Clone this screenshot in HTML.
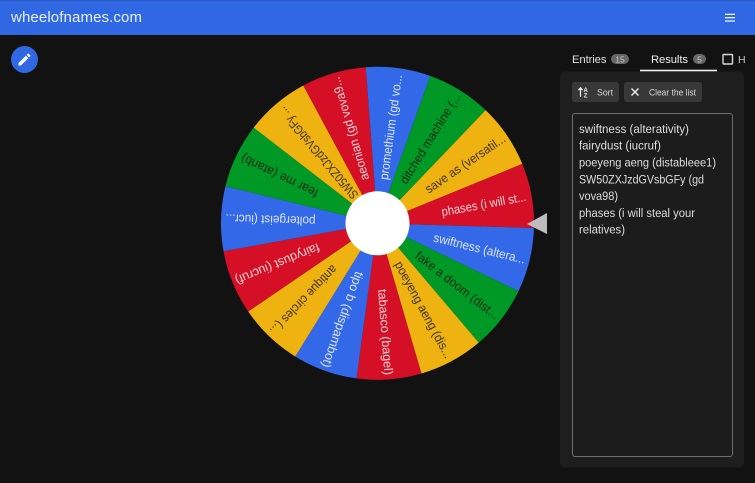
<!DOCTYPE html>
<html><head><meta charset="utf-8"><title>wheelofnames.com</title>
<style>
html,body{margin:0;padding:0;background:#121212;width:755px;height:483px;overflow:hidden}
svg{display:block;filter:blur(.3px)}
text{font-family:"Liberation Sans",sans-serif}
.w text{font-size:12.6px}
.l{fill:#fff;opacity:.82}.d{fill:#111;opacity:.8}
</style></head><body>
<svg width="755" height="483" viewBox="0 0 755 483" xmlns="http://www.w3.org/2000/svg">
<rect width="755" height="483" fill="#121212"/>
<rect width="755" height="35" fill="#3068e4"/>
<rect width="755" height="1" fill="#2a58c0"/>
<text x="11" y="22" font-size="15" fill="#e8f0fd" textLength="131" lengthAdjust="spacing">wheelofnames.com</text>
<g fill="#e8f0fd"><rect x="725" y="13.7" width="10" height="1.3"/><rect x="725" y="17" width="10" height="1.3"/><rect x="725" y="20.4" width="10" height="1.3"/></g>
<circle cx="24.5" cy="59.5" r="13.5" fill="#3068e4"/>
<path transform="translate(16.5 51.5) scale(.667)" fill="#f2f5fc" d="M3 17.25V21h3.75L17.81 9.94l-3.75-3.75L3 17.25zM20.71 7.04a1 1 0 0 0 0-1.41l-2.34-2.34a1 1 0 0 0-1.41 0l-1.83 1.83 3.75 3.75 1.83-1.83z"/>

<g class="w" transform="translate(377.5 223.3)">
<g id="wedges">
<path transform="rotate(1.7)" fill="#3369e8" d="M0 0L156.5 0A156.5 156.5 0 0 1 142.97 63.65Z"/>
<path transform="rotate(25.7)" fill="#009925" d="M0 0L156.5 0A156.5 156.5 0 0 1 142.97 63.65Z"/>
<path transform="rotate(49.7)" fill="#eeb211" d="M0 0L156.5 0A156.5 156.5 0 0 1 142.97 63.65Z"/>
<path transform="rotate(73.7)" fill="#d50f25" d="M0 0L156.5 0A156.5 156.5 0 0 1 142.97 63.65Z"/>
<path transform="rotate(97.7)" fill="#3369e8" d="M0 0L156.5 0A156.5 156.5 0 0 1 142.97 63.65Z"/>
<path transform="rotate(121.7)" fill="#eeb211" d="M0 0L156.5 0A156.5 156.5 0 0 1 142.97 63.65Z"/>
<path transform="rotate(145.7)" fill="#d50f25" d="M0 0L156.5 0A156.5 156.5 0 0 1 142.97 63.65Z"/>
<path transform="rotate(169.7)" fill="#3369e8" d="M0 0L156.5 0A156.5 156.5 0 0 1 142.97 63.65Z"/>
<path transform="rotate(193.7)" fill="#009925" d="M0 0L156.5 0A156.5 156.5 0 0 1 142.97 63.65Z"/>
<path transform="rotate(217.7)" fill="#eeb211" d="M0 0L156.5 0A156.5 156.5 0 0 1 142.97 63.65Z"/>
<path transform="rotate(241.7)" fill="#d50f25" d="M0 0L156.5 0A156.5 156.5 0 0 1 142.97 63.65Z"/>
<path transform="rotate(265.7)" fill="#3369e8" d="M0 0L156.5 0A156.5 156.5 0 0 1 142.97 63.65Z"/>
<path transform="rotate(289.7)" fill="#009925" d="M0 0L156.5 0A156.5 156.5 0 0 1 142.97 63.65Z"/>
<path transform="rotate(313.7)" fill="#eeb211" d="M0 0L156.5 0A156.5 156.5 0 0 1 142.97 63.65Z"/>
<path transform="rotate(337.7)" fill="#d50f25" d="M0 0L156.5 0A156.5 156.5 0 0 1 142.97 63.65Z"/>
</g>
<text class="l" transform="rotate(13.7)" x="58" y="4.5" textLength="94" lengthAdjust="spacingAndGlyphs">swiftness (altera...</text>
<text class="d" transform="rotate(37.7)" x="50" y="4.5" textLength="102" lengthAdjust="spacingAndGlyphs">fake a doom (dist...</text>
<text class="d" transform="rotate(61.7)" x="44" y="4.5" textLength="108" lengthAdjust="spacingAndGlyphs">poeyeng aeng (dis...</text>
<text class="l" transform="rotate(85.7)" x="66" y="4.5" textLength="86" lengthAdjust="spacingAndGlyphs">tabasco (bagel)</text>
<text class="l" transform="rotate(109.7)" x="52" y="4.5" textLength="101" lengthAdjust="spacingAndGlyphs">tipo b (dispambot)</text>
<text class="d" transform="rotate(133.7)" x="61" y="4.5" textLength="91" lengthAdjust="spacingAndGlyphs">antique circles (...</text>
<text class="l" transform="rotate(157.7)" x="63" y="4.5" textLength="90" lengthAdjust="spacingAndGlyphs">fairydust (iucruf)</text>
<text class="l" transform="rotate(181.7)" x="62" y="4.5" textLength="90" lengthAdjust="spacingAndGlyphs">poltergeist (iucr...</text>
<text class="d" transform="rotate(205.7)" x="67" y="4.5" textLength="84" lengthAdjust="spacingAndGlyphs">fear me (atanb)</text>
<text class="d" transform="rotate(229.7)" x="34" y="4.5" textLength="116" lengthAdjust="spacingAndGlyphs">SW50ZXJzdGVsbGFy ...</text>
<text class="l" transform="rotate(253.7)" x="45" y="4.5" textLength="107" lengthAdjust="spacingAndGlyphs">aeonian (gd vova9...</text>
<text class="l" transform="rotate(277.7)" x="44" y="4.5" textLength="106" lengthAdjust="spacingAndGlyphs">promethium (gd vo...</text>
<text class="d" transform="rotate(301.7)" x="48" y="4.5" textLength="104" lengthAdjust="spacingAndGlyphs">ditched machine (...</text>
<text class="d" transform="rotate(325.7)" x="59" y="4.5" textLength="94" lengthAdjust="spacingAndGlyphs">save as (versatil...</text>
<text class="l" transform="rotate(349.7)" x="65" y="4.5" textLength="86" lengthAdjust="spacingAndGlyphs">phases (i will st...</text>
<circle r="32" fill="#fff"/>
</g>
<path d="M527 224L547 213V234Z" fill="#bdbdbd"/>

<text x="572" y="63" font-size="11.3" fill="#e0e0e0" textLength="34.5" lengthAdjust="spacing">Entries</text>
<rect x="611" y="54" width="18" height="10" rx="5" fill="#666"/>
<text x="620" y="62.3" font-size="8.5" fill="#c8c8c8" text-anchor="middle">15</text>
<text x="651" y="63" font-size="11.3" fill="#f0f0f0" textLength="37" lengthAdjust="spacing">Results</text>
<rect x="693" y="54" width="13" height="10" rx="5" fill="#666"/>
<text x="699.5" y="62.3" font-size="8.5" fill="#c8c8c8" text-anchor="middle">5</text>
<rect x="640" y="69.7" width="77" height="1.6" fill="#f0f0f0"/>
<rect x="723" y="54.5" width="9.5" height="9.5" fill="none" stroke="#d8d8d8" stroke-width="1.4" rx=".8"/>
<text x="738" y="63" font-size="10.5" fill="#c8c8c8">H</text>

<rect x="560" y="71.5" width="184" height="396" rx="6" fill="#1e1e1e"/>
<rect x="572" y="82" width="47" height="20" rx="3" fill="#383838"/>
<rect x="624" y="82" width="78" height="20" rx="3" fill="#383838"/>
<g stroke="#eee" stroke-width="1.2" fill="none"><path d="M580.5 97V88M578.4 90.2L580.5 87.8L582.6 90.2"/></g>
<text x="583.5" y="91.8" font-size="6" font-weight="bold" fill="#eee">A</text>
<text x="583.8" y="97.6" font-size="6" font-weight="bold" fill="#eee">Z</text>
<text x="597" y="95.3" font-size="9" fill="#d8d8d8" textLength="16" lengthAdjust="spacingAndGlyphs">Sort</text>
<path d="M631.5 88.5L638.5 95.5M638.5 88.5L631.5 95.5" stroke="#eee" stroke-width="1.4" fill="none"/>
<text x="649" y="95.3" font-size="9" fill="#d8d8d8" textLength="47" lengthAdjust="spacingAndGlyphs">Clear the list</text>

<rect x="572.5" y="113.5" width="160" height="343" rx="2.5" fill="#1c1c1c" stroke="#6e6e6e" stroke-width="1"/>
<g font-size="12.2" fill="#dedede">
<text x="579" y="133" textLength="110" lengthAdjust="spacingAndGlyphs">swiftness (alterativity)</text>
<text x="579" y="149.7" textLength="82" lengthAdjust="spacingAndGlyphs">fairydust (iucruf)</text>
<text x="579" y="166.5" textLength="137" lengthAdjust="spacingAndGlyphs">poeyeng aeng (distableee1)</text>
<text x="579" y="183.3" textLength="125" lengthAdjust="spacingAndGlyphs">SW50ZXJzdGVsbGFy (gd</text>
<text x="579" y="200" textLength="39" lengthAdjust="spacingAndGlyphs">vova98)</text>
<text x="579" y="216.8" textLength="116" lengthAdjust="spacingAndGlyphs">phases (i will steal your</text>
<text x="579" y="233.6" textLength="46" lengthAdjust="spacingAndGlyphs">relatives)</text>
</g>
</svg>
</body></html>
